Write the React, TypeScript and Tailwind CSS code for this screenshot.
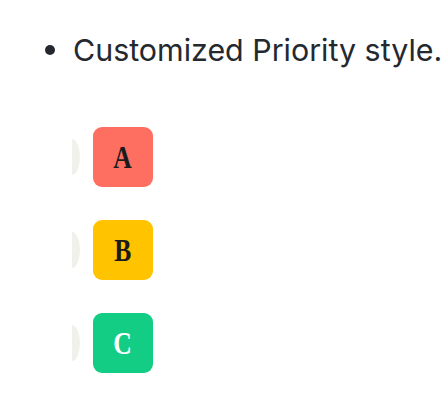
const priorities = [
  { id: 'A', bg: 'bg-[#ff6f61]', text: 'text-[#1b1b1b]' },
  { id: 'B', bg: 'bg-[#ffc300]', text: 'text-[#1b1b1b]' },
  { id: 'C', bg: 'bg-[#14cd84]', text: 'text-white' },
];

export default function App() {
  return (
    <div className="w-[448px] h-[404px] bg-white overflow-hidden pt-[30px]">
      <div className="pl-[45px] flex items-center h-[40px] font-['Inter',sans-serif] text-[30.4px] leading-[40px] text-[#24292f]">
        <span className="w-[10px] h-[10px] rounded-full bg-[#24292f] mr-[18px]" />
        <span>Customized Priority style.</span>
      </div>

      <div className="mt-[57px] pl-[72px] flex flex-col gap-[33px]">
        {priorities.map((p) => (
          <div key={p.id} className="flex items-center gap-[13px]">
            <div className="w-[8px] h-[36px] overflow-hidden">
              <div className="-ml-[8px] w-[16px] h-[36px] rounded-[50%] bg-[#f1f1ec]" />
            </div>
            <div
              className={`w-[60px] h-[60px] rounded-[9px] flex items-center justify-center ${p.bg}`}
            >
              <span
                className={`scale-x-[0.8] font-['Liberation_Serif',serif] font-bold text-[32px] leading-none ${p.text}`}
              >
                {p.id}
              </span>
            </div>
          </div>
        ))}
      </div>
    </div>
  );
}
